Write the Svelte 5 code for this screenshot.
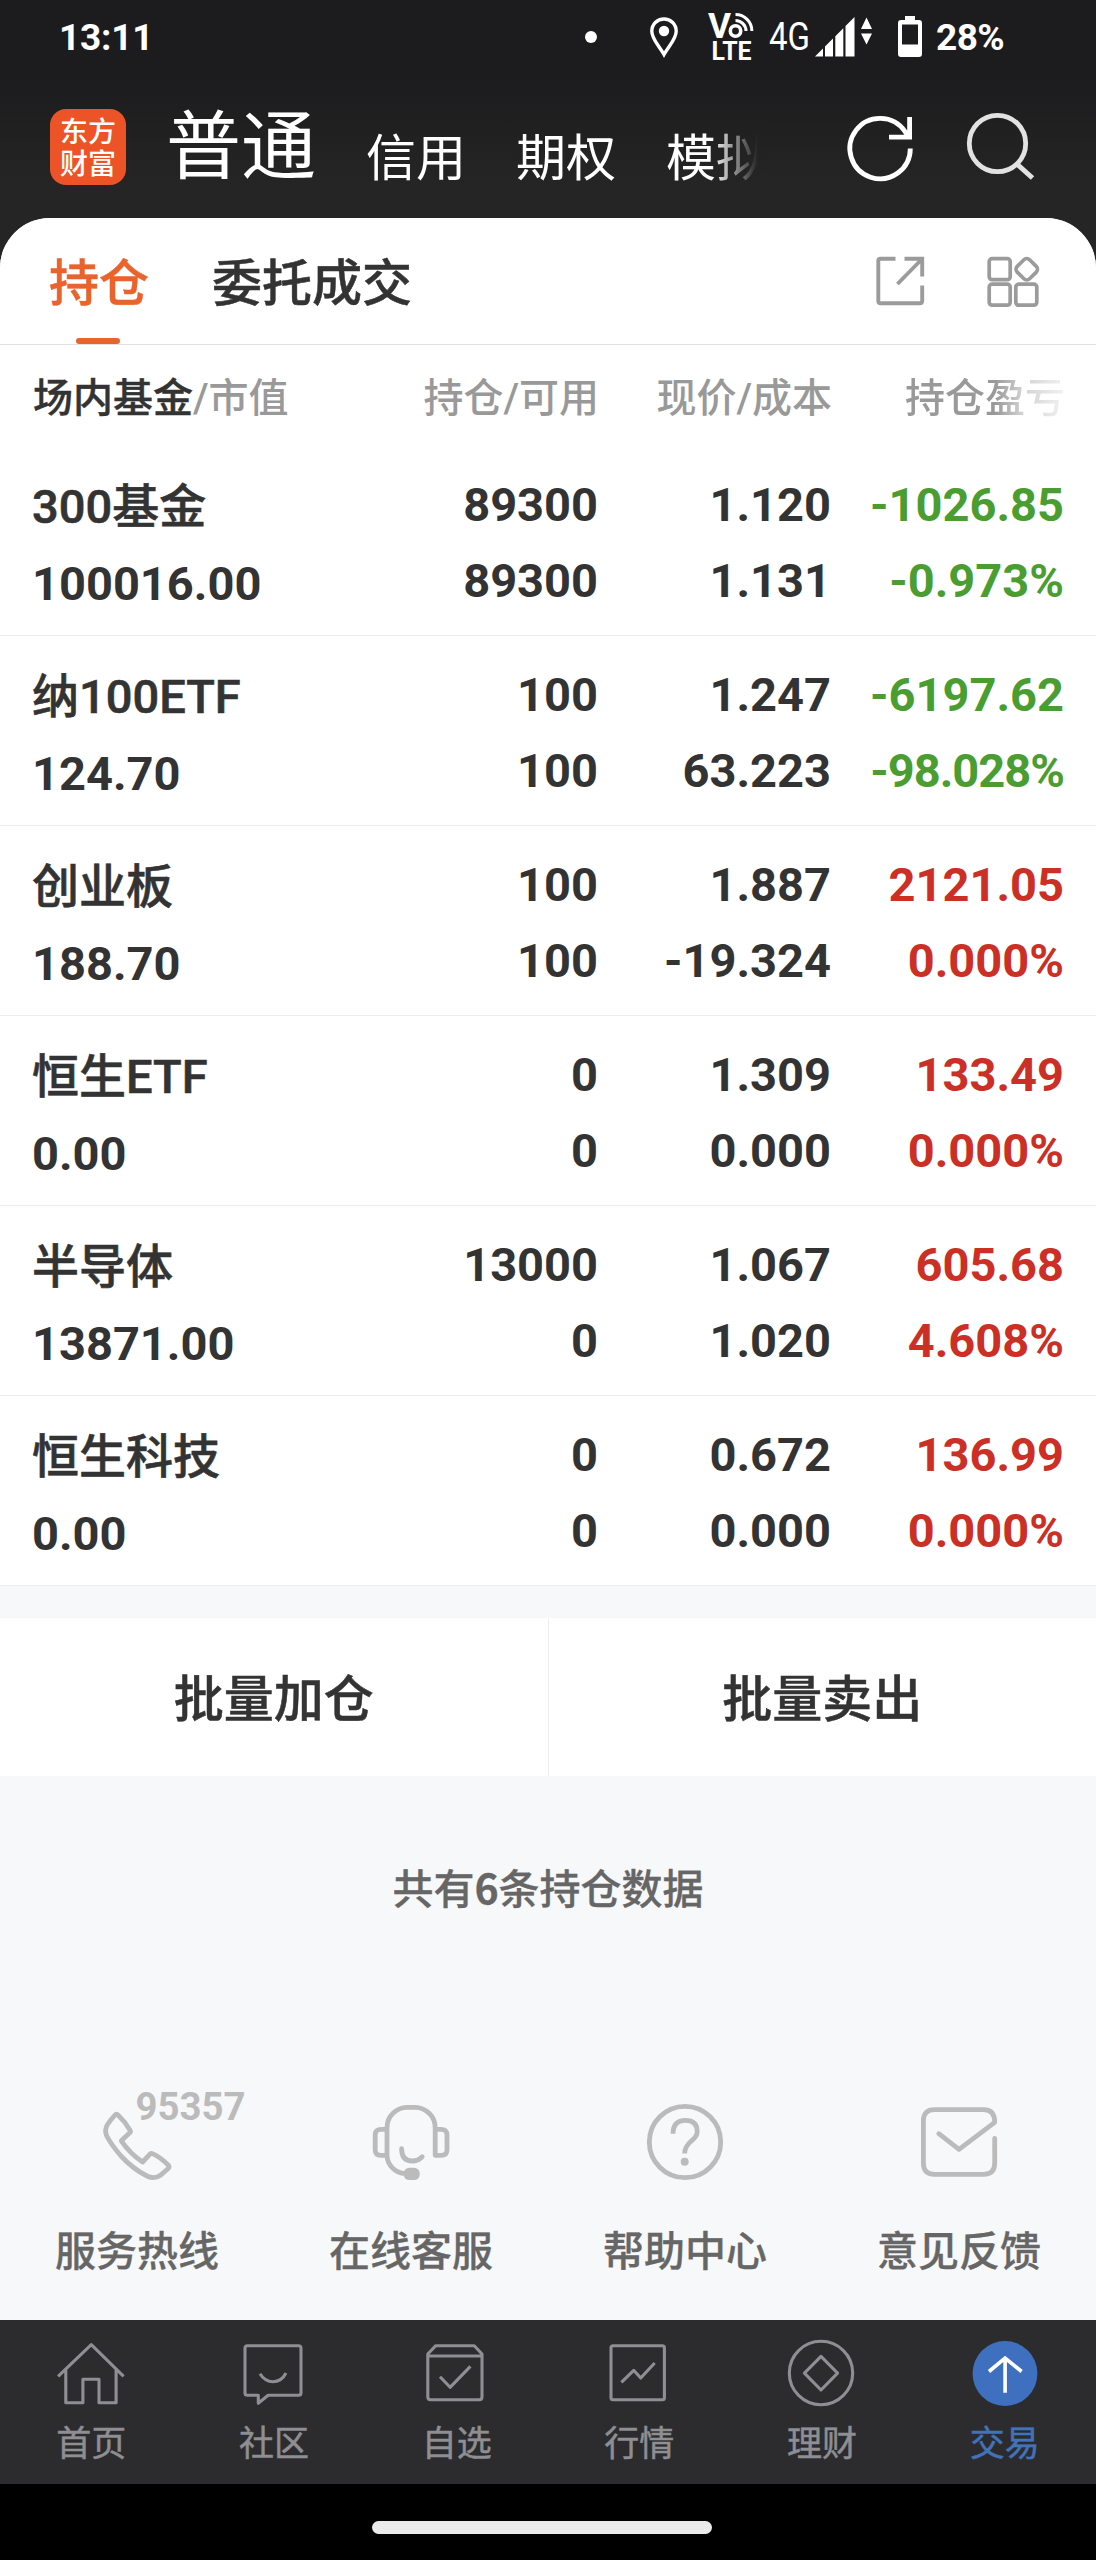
<script lang="ts">
  type Holding = {
    name: string;
    value: string;
    qty: string;
    avail: string;
    price: string;
    cost: string;
    profit: string;
    rate: string;
    down?: boolean;
  };

  const markets = ['信用', '期权', '模拟'];

  const holdings: Holding[] = [
    { name: '300基金', value: '100016.00', qty: '89300', avail: '89300', price: '1.120', cost: '1.131', profit: '-1026.85', rate: '-0.973%', down: true },
    { name: '纳100ETF', value: '124.70', qty: '100', avail: '100', price: '1.247', cost: '63.223', profit: '-6197.62', rate: '-98.028%', down: true },
    { name: '创业板', value: '188.70', qty: '100', avail: '100', price: '1.887', cost: '-19.324', profit: '2121.05', rate: '0.000%' },
    { name: '恒生ETF', value: '0.00', qty: '0', avail: '0', price: '1.309', cost: '0.000', profit: '133.49', rate: '0.000%' },
    { name: '半导体', value: '13871.00', qty: '13000', avail: '0', price: '1.067', cost: '1.020', profit: '605.68', rate: '4.608%' },
    { name: '恒生科技', value: '0.00', qty: '0', avail: '0', price: '0.672', cost: '0.000', profit: '136.99', rate: '0.000%' },
  ];

  const services = [
    { id: 'phone', label: '服务热线' },
    { id: 'headset', label: '在线客服' },
    { id: 'help', label: '帮助中心' },
    { id: 'mail', label: '意见反馈' },
  ];

  const navItems = [
    { id: 'home', label: '首页' },
    { id: 'community', label: '社区' },
    { id: 'watch', label: '自选' },
    { id: 'quotes', label: '行情' },
    { id: 'wealth', label: '理财' },
    { id: 'trade', label: '交易' },
  ];

  let tab = $state('hold');
  let activeNav = $state('trade');
</script>

<div class="screen">
  <div class="top">
    <div class="status">
      <span class="clock">13:11</span>
      <span class="dot"></span>
      <svg class="pin" width="28" height="40" viewBox="0 0 28 40" fill="none">
        <path d="M14 2C7.2 2 1.8 7.3 1.8 14.2C1.8 22 8.600 28 14 37.500C19.400 28 26.200 22 26.200 14.200C26.200 7.300 20.800 2 14 2Z" stroke="#fff" stroke-width="3.4" />
        <circle cx="14" cy="14" r="5.200" fill="#fff" />
      </svg>
      <svg class="volte" width="48" height="50" viewBox="0 0 48 50">
        <text x="0" y="26" font-size="35" font-weight="700" textLength="23" lengthAdjust="spacingAndGlyphs" fill="#fff">V</text>
        <circle cx="27.500" cy="19" r="5.200" fill="none" stroke="#fff" stroke-width="3.600" />
        <path d="M27.500 8.500A10.500 10.500 0 0 1 38 19M27.500 2.600A16.400 16.400 0 0 1 43.900 19" fill="none" stroke="#fff" stroke-width="3" />
        <text x="3.500" y="48.300" font-size="25.500" font-weight="700" textLength="40" lengthAdjust="spacingAndGlyphs" fill="#fff">LTE</text>
      </svg>
      <svg class="net" width="42" height="40" viewBox="0 0 42 40">
        <text x="0" y="33" font-size="38" textLength="41" lengthAdjust="spacingAndGlyphs" fill="#fff">4G</text>
      </svg>
      <svg class="signal" width="58" height="42" viewBox="0 0 58 42" fill="#fff">
        <path d="M0 40.500L8 32.500V40.500ZM10 30.500L18 22.500V40.500H10ZM20.300 20.200L28.300 12.200V40.500H20.300ZM30.500 10L39.500 1V40.500H30.500Z" />
        <path d="M46 13L51.500 1.500L57 13ZM46 17.500H57L51.500 28.500Z" />
      </svg>
      <svg class="battery" width="26" height="42" viewBox="0 0 26 42">
        <path d="M8 0H18V4H22Q25 4 25 7V38Q25 41 22 41H4Q1 41 1 38V7Q1 4 4 4H8ZM5 8.500V28.500H21V8.500Z" fill="#fff" fill-rule="evenodd" />
      </svg>
      <span class="percent">28%</span>
    </div>

    <header class="bar">
      <div class="logo"><span>东方</span><span>财富</span></div>
      <div class="markets">
        <b>普通</b>
        {#each markets as m}
          <span>{m}</span>
        {/each}
      </div>
      <svg class="refresh" width="68" height="68" viewBox="0 0 68 68" fill="none" stroke="#fff" stroke-width="4.800">
        <path d="M64.300 34.500A30.200 30.200 0 1 1 59 17.500L63 23M63.600 3V23.200H43" />
      </svg>
      <svg class="search" width="68" height="68" viewBox="0 0 68 68" fill="none" stroke="#e2e2e2" stroke-width="4.800">
        <circle cx="31.500" cy="30.500" r="28.200" />
        <path d="M51.500 51.500L66.500 65" stroke-width="5" />
      </svg>
    </header>
  </div>

  <main>
    <section class="card">
      <div class="tabs">
        <button class:on={tab === 'hold'} onclick={() => (tab = 'hold')}>持仓</button>
        <button class:on={tab === 'orders'} onclick={() => (tab = 'orders')}>委托成交</button>
        <svg class="share" width="50" height="50" viewBox="0 0 50 50" fill="none" stroke="#9b9b9b" stroke-width="3.900">
          <path d="M20.500 2.800H5.500Q3.300 2.800 3.300 5V45Q3.300 47.200 5.500 47.200H45Q47.200 47.200 47.200 45V29.500M29.500 2.800H47.200V20.500M47 3L22.500 28" />
        </svg>
        <svg class="grid-icon" width="54" height="52" viewBox="0 0 54 52" fill="none" stroke="#9b9b9b" stroke-width="3.700">
          <rect x="2.200" y="2.700" width="21" height="21" rx="3" />
          <rect x="2.200" y="28.200" width="21" height="21" rx="3" />
          <rect x="28.800" y="28.200" width="21" height="21" rx="3" />
          <rect x="31" y="4.500" width="17.500" height="17.500" rx="4" transform="rotate(45 39.750 13.250)" />
        </svg>
      </div>

      <div class="row head">
        <div class="name"><em>场内基金</em>/市值</div>
        <div>持仓/可用</div>
        <div>现价/成本</div>
        <div class="fade">持仓盈亏</div>
      </div>

      {#each holdings as h}
        <div class="row">
          <div class="name"><span>{h.name}</span><br />{h.value}</div>
          <div>{h.qty}<br />{h.avail}</div>
          <div>{h.price}<br />{h.cost}</div>
          <div class={h.down ? 'down' : 'up'}>
            {h.profit}<br /><span class:tight={h.rate.length > 7}>{h.rate}</span>
          </div>
        </div>
      {/each}
    </section>

    <div class="batch">
      <button>批量加仓</button>
      <button>批量卖出</button>
    </div>

    <p class="count">共有<b>{holdings.length}</b>条持仓数据</p>

    <div class="services">
      {#each services as s}
        <div class="service">
          <svg width="76" height="76" viewBox="0 0 76 76" fill="none" stroke="#bbb" stroke-width="4.800" stroke-linejoin="round">
            {#if s.id === 'phone'}
              <path d="M16 11Q17.400 9.400 19 11Q26 17.500 31.200 26.500Q31.800 27.700 31 28.500L22.300 36.800Q31 49.500 43.600 58L51.200 49.900Q52.300 49 53.500 49.600Q62 53.500 69.500 61.500Q70.600 63 69.500 64.200L61.500 71.300Q55.500 75.500 48 72Q34 65 22 52Q12 40.500 7.500 31.500Q5.400 25.500 8.500 20.500Q11.500 16 16 11Z" />
              <text x="36.500" y="16" font-size="39" font-weight="700" textLength="110" lengthAdjust="spacingAndGlyphs" fill="#bbb" stroke="none">95357</text>
            {:else if s.id === 'headset'}
              <path d="M14 51.300V24Q14 15 20 9.300Q26 3.300 34 3.300H42.200Q50 3.300 56.200 9.300Q62.200 15 62.200 24V51.300H68Q74 51.300 74 46V31Q74 25.300 68 25.300H62.200M14 25.300H8Q2.200 25.300 2.200 31V46Q2.200 51.300 8 51.300H14Q14 59 20 64.500Q25 69 32 69.700" />
              <path d="M28.600 44.700Q28.600 57 39.500 57Q45 57 49.200 52.700" stroke-linecap="round" />
              <rect x="30.700" y="63.800" width="16" height="12.200" rx="5.500" fill="#bbb" stroke="none" />
            {:else if s.id === 'help'}
              <circle cx="38" cy="38" r="35.700" />
              <path d="M26 29.700Q26 16.300 38.400 16.300Q50.200 16.300 50.200 27.500Q50.200 32.500 44.300 37Q37.700 42.500 37.700 49.500" />
              <circle cx="37.700" cy="57.700" r="4" fill="#bbb" stroke="none" />
            {:else}
              <path d="M73.700 34.500V59.300Q73.700 70.300 62.700 70.300H13.400Q2.400 70.300 2.400 59.300V16.700Q2.400 5.700 13.400 5.700H62.700Q73.700 5.700 73.700 18.300L38 45.300L17.800 29.700" stroke-linecap="round" />
            {/if}
          </svg>
          <span>{s.label}</span>
        </div>
      {/each}
    </div>
  </main>

  <nav>
    {#each navItems as item}
      <button class:active={activeNav === item.id} onclick={() => (activeNav = item.id)}>
        <svg width="70" height="70" viewBox="0 0 70 70" fill="none" stroke="currentColor" stroke-width="3.100" stroke-linejoin="round">
          {#if item.id === 'home'}
            <path d="M2.100 38.300L35.300 6.700L67.600 38.300M9.800 32V64.700H26.900V41.300H43V64.700H60.100V32" />
          {:else if item.id === 'community'}
            <path d="M8.500 7.700H59.500Q62 7.700 62 10V55Q62 57.300 59.500 57.300H29.100L19.300 65.300V57.300H8.500Q6 57.300 6 55V10Q6 7.700 8.500 7.700Z" />
            <path d="M21 35.700Q26 43.700 34 43.700Q42.500 43.700 47 35" />
          {:else if item.id === 'watch'}
            <path d="M5.800 18H60V59Q60 61.700 57.300 61.700H8.500Q5.800 61.700 5.800 59V16L13.800 7.700H52.300L60 16V18M18 38.700L28.100 49.300L48.400 28.300" />
          {:else if item.id === 'quotes'}
            <rect x="7" y="7.700" width="53.400" height="54" rx="2" />
            <path d="M17.400 44.300L29.700 32.300L36.700 40L50.700 25" />
          {:else if item.id === 'wealth'}
            <circle cx="34" cy="35" r="31.700" />
            <path d="M34 18.300L50.600 35.100L34 52L17.400 35.100Z" />
          {:else}
            <circle cx="35" cy="35.500" r="32.400" fill="#3f70c0" stroke="none" />
            <path d="M35.100 20V54.700M19 33.500L35.100 20L51.600 33.500" stroke="#fff" stroke-width="3.600" stroke-linejoin="miter" />
          {/if}
        </svg>
        <span>{item.label}</span>
      </button>
    {/each}
  </nav>
  <div class="gesture"><i></i></div>
</div>

<style>
  :global(body) {
    background: #000;
  }
  .screen {
    width: 1096px;
    height: 2560px;
    display: flex;
    flex-direction: column;
    font-family: Roboto, 'Noto Sans CJK SC', sans-serif;
    color: #333;
    background: #252525;
    overflow: hidden;
  }
  svg {
    display: block;
    flex: none;
    overflow: visible;
  }
  button {
    font: inherit;
    color: inherit;
    background: none;
    border: 0;
    padding: 0;
  }

  .top {
    height: 218px;
    background: linear-gradient(#1c1c1e 35%, #252525 85%);
    color: #fff;
  }
  .status {
    height: 74px;
    display: flex;
    align-items: center;
    font-size: 37px;
    font-weight: 700;
  }
  .clock {
    width: 526px;
    padding-left: 59px;
    letter-spacing: -0.2px;
  }
  .dot {
    width: 12px;
    height: 12px;
    border-radius: 50%;
    background: #fff;
  }
  .pin {
    margin-left: 53px;
  }
  .volte {
    margin-left: 30px;
  }
  .net {
    margin-left: 13px;
    font-weight: 400;
  }
  .signal {
    margin-left: 4px;
  }
  .battery {
    margin-left: 24px;
  }
  .percent {
    margin-left: 13px;
    letter-spacing: -0.6px;
  }

  .bar {
    height: 144px;
    display: flex;
    align-items: flex-start;
    padding-left: 50px;
  }
  .logo {
    width: 76px;
    height: 76px;
    margin-top: 35px;
    padding-top: 8px;
    box-sizing: border-box;
    border-radius: 16px;
    background: #ec5428;
    display: flex;
    flex-direction: column;
    align-items: center;
    font-size: 28px;
    line-height: 32px;
    font-weight: 500;
  }
  .markets {
    width: 640px;
    margin-left: 40px;
    display: flex;
    gap: 50px;
    font-size: 50px;
    line-height: 150px;
    white-space: nowrap;
    overflow: hidden;
    mask-image: linear-gradient(90deg, #000 545px, transparent 592px);
  }
  .markets b {
    font-size: 75px;
    line-height: 147px;
    font-weight: 400;
  }
  .markets span {
    padding-top: 10px;
  }
  .refresh {
    margin: 40px 0 0 40px;
  }
  .search {
    margin: 39px 0 0 52px;
  }

  main {
    height: 2102px;
    background: #f7f8fa;
    border-radius: 50px 50px 0 0;
    overflow: hidden;
  }
  .card {
    background: #fff;
  }
  .tabs {
    height: 127px;
    box-sizing: border-box;
    border-bottom: 1px solid #e0e0e0;
    display: flex;
    padding: 0 55px 0 49px;
    font-size: 50px;
    font-weight: 500;
    -webkit-text-stroke: 0.5px;
  }
  .tabs button {
    position: relative;
    margin-right: 63px;
    line-height: 133px;
    height: 126px;
  }
  .tabs .on {
    color: #ea632c;
  }
  .tabs .on::after {
    content: '';
    position: absolute;
    left: 27px;
    bottom: 0;
    width: 44px;
    height: 6px;
    border-radius: 3px;
    background: #ea632c;
  }
  .share {
    margin: 38px 0 0 auto;
  }
  .grid-icon {
    margin: 38px 0 0 62px;
  }

  .row {
    height: 190px;
    box-sizing: border-box;
    border-bottom: 1px solid #ececec;
    padding: 21px 32px 0 32px;
    display: grid;
    grid-template-columns: 366px 200px 233px 233px;
    font-size: 47px;
    line-height: 76px;
    font-weight: 700;
    text-align: right;
    white-space: nowrap;
  }
  .row .name {
    text-align: left;
    line-height: 77px;
    padding-top: 1px;
  }
  .name span {
    font-weight: 500;
    -webkit-text-stroke: 0.6px;
  }
  .down {
    color: #4a9d30;
  }
  .up {
    color: #cb2f25;
  }
  .tight {
    letter-spacing: -1px;
  }
  .row.head {
    height: 101px;
    padding: 7px 31px 0 33px;
    border: 0;
    font-size: 40px;
    line-height: 94px;
    font-weight: 500;
    color: #999;
  }
  .head .name {
    line-height: 94px;
    padding: 0;
  }
  .head em {
    font-style: normal;
    color: #333;
    -webkit-text-stroke: 0.4px;
  }
  .fade {
    mask-image: linear-gradient(90deg, #000 163px, rgba(0, 0, 0, 0.45) 190px, rgba(0, 0, 0, 0.12) 233px);
  }

  .batch {
    margin-top: 32px;
    height: 158px;
    background: #fff;
    display: flex;
  }
  .batch button {
    flex: 1;
    font-size: 50px;
    font-weight: 500;
    line-height: 165px;
    -webkit-text-stroke: 0.5px;
  }
  .batch button:first-child {
    border-right: 1px solid #ececec;
  }
  .count {
    margin: 0;
    padding-top: 80px;
    font: 500 41px/60px 'Noto Sans CJK SC', sans-serif;
    text-align: center;
    color: #666;
    -webkit-text-stroke: 0.3px;
  }
  .services {
    margin-top: 188px;
    display: grid;
    grid-template-columns: repeat(4, 1fr);
  }
  .service {
    display: flex;
    flex-direction: column;
    align-items: center;
    font-size: 41px;
    font-weight: 500;
    line-height: 60px;
    color: #666;
  }
  .service span {
    margin-top: 42px;
    -webkit-text-stroke: 0.3px;
  }

  nav {
    height: 164px;
    background: #2c2c2e;
    display: grid;
    grid-template-columns: repeat(6, 1fr);
    color: #8e8e93;
  }
  nav button {
    display: flex;
    flex-direction: column;
    align-items: center;
    padding-top: 18px;
    font-size: 35px;
    line-height: 50px;
  }
  nav span {
    margin-top: 12px;
    -webkit-text-stroke: 0.5px;
  }
  nav .active {
    color: #4272b8;
  }
  .gesture {
    flex: 1;
    background: #000;
  }
  .gesture i {
    display: block;
    width: 340px;
    height: 13px;
    margin: 37px 0 0 372px;
    border-radius: 7px;
    background: #ebebeb;
  }
</style>
